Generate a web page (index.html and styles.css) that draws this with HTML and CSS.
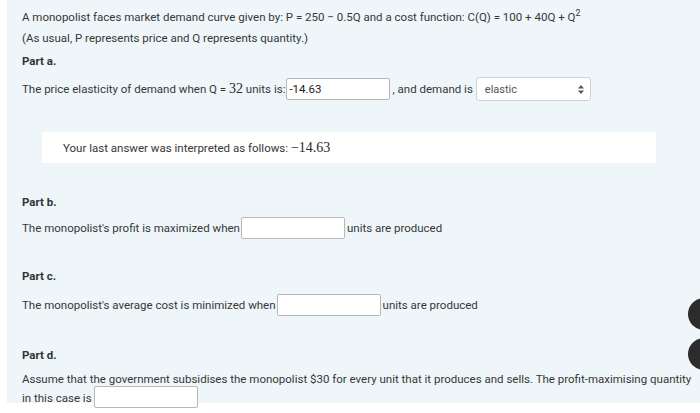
FILE: index.html
```html
<!DOCTYPE html>
<html>
<head>
<meta charset="utf-8">
<link rel="stylesheet" href="styles.css">
</head>
<body>
<div class="panel">
  <p class="line l1">A monopolist faces market demand curve given by: P = 250 − 0.5Q and a cost function: C(Q) = 100 + 40Q + Q<sup>2</sup></p>
  <p class="line l2">(As usual, P represents price and Q represents quantity.)</p>
  <p class="line part pa">Part a.</p>
  <div class="row ra">
    <span>The price elasticity of demand when Q = <span class="math">32</span> units is:</span>
    <span class="field filled">-14.63</span>
    <span>, and demand is</span>
    <span class="select">elastic
      <svg class="caret" width="6" height="9" viewBox="0 0 6 9"><path d="M0 3.6 L3 0 L6 3.6 Z M0 5.4 L3 9 L6 5.4 Z" fill="#555"/></svg>
    </span>
  </div>
  <div class="interp">Your last answer was interpreted as follows: <span class="math">−14.63</span></div>
  <p class="line part pb">Part b.</p>
  <div class="row rb">
    <span>The monopolist's profit is maximized when</span>
    <span class="field"></span>
    <span>units are produced</span>
  </div>
  <p class="line part pc">Part c.</p>
  <div class="row rc">
    <span>The monopolist's average cost is minimized when</span>
    <span class="field"></span>
    <span>units are produced</span>
  </div>
  <p class="line part pd">Part d.</p>
  <p class="para">Assume that the government subsidises the monopolist $30 for every unit that it produces and sells. The profit-maximising quantity in this case is<span class="field inl"></span></p>
</div>
<div class="dots">
  <span class="dot"></span>
  <span class="dot"></span>
</div>
</body>
</html>
```
FILE: styles.css
```css
html, body {
  margin: 0;
  padding: 0;
  background: #ffffff;
  width: 700px;
  height: 413px;
  overflow: hidden;
}
body {
  font-family: Roboto, "Liberation Sans", sans-serif;
  font-size: 11.5px;
  color: #363636;
  position: relative;
}
.panel {
  margin-left: 7px;
  background: #eef6fa;
  padding: 7px 6px 0 15px;
  height: 403px;
  box-sizing: border-box;
}
p { margin: 0; }
.line {
  line-height: 20px;
  height: 20px;
}
.l2 { margin-top: 1px; }
.part { font-weight: bold; color: #333; }
.pa { margin-top: 3px; }
sup { font-size: 9px; line-height: 0; vertical-align: 5px; }
.math {
  font-family: "Liberation Serif", "DejaVu Serif", serif;
  font-size: 14px;
  color: #2a2a2a;
}
.row {
  display: flex;
  align-items: center;
  height: 24px;
}
.ra { margin-top: 6px; }
.field {
  display: inline-block;
  box-sizing: border-box;
  width: 104px;
  height: 22px;
  background: #fff;
  border: 1px solid #b8b8b8;
  border-radius: 2px;
  margin: 0 2px 0 1px;
  line-height: 20px;
  padding-left: 2px;
  color: #222;
}
.select {
  box-sizing: border-box;
  width: 115px;
  height: 24px;
  margin-left: 3px;
  background: #fff;
  border: 1px solid #c9d3d8;
  border-radius: 3px;
  display: flex;
  align-items: center;
  justify-content: space-between;
  padding: 0 6px 0 8px;
  color: #555;
  font-size: 11px;
}
.caret { display: block; }
.interp {
  margin: 31px 38px 0 20px;
  height: 31px;
  line-height: 31px;
  background: #ffffff;
  padding-left: 21px;
}
.pb { margin-top: 29px; }
.rb { margin-top: 4px; }
.pc { margin-top: 26px; }
.rc { margin-top: 7px; }
.pd { margin-top: 28px; }
.para {
  margin-top: 5px;
  line-height: 19px;
}
.field.inl {
  vertical-align: middle;
  margin-left: 2px;
  margin-top: -3px;
}
.dots {
  position: absolute;
  right: -20px;
  top: 298px;
  display: flex;
  flex-direction: column;
  gap: 8px;
}
.dot {
  display: block;
  width: 32px;
  height: 32px;
  border-radius: 50%;
  background: #2b2b2b;
}
```
